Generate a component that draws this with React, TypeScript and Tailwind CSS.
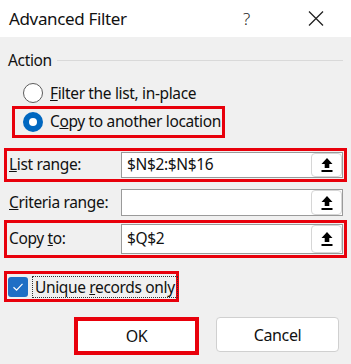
import type { ReactNode } from "react"

const font = { fontFamily: '"Noto Sans", "Open Sans", sans-serif' }

function UpArrow() {
  return (
    <svg width="12" height="16" viewBox="0 0 12 16" aria-hidden="true">
      <polygon points="6,1 11.5,7 8.3,7 8.3,11 3.7,11 3.7,7 0.5,7" fill="#000" />
      <rect x="0.5" y="13" width="11" height="2" fill="#000" />
    </svg>
  )
}

function Radio({ checked }: { checked?: boolean }) {
  return checked ? (
    <span className="flex h-5 w-5 shrink-0 items-center justify-center rounded-full bg-[#0067c0]">
      <span className="h-2 w-2 rounded-full bg-white" />
    </span>
  ) : (
    <span className="h-5 w-5 shrink-0 rounded-full border border-[#5c5c5c] bg-white" />
  )
}

function RangeRow({
  label,
  value,
  boxed,
  rowClass,
}: {
  label: ReactNode
  value?: string
  boxed?: boolean
  rowClass: string
}) {
  return (
    <div
      className={`flex items-center border-[3px] pl-[2px] pr-[1px] ${
        boxed ? "border-[#e8000b]" : "border-transparent"
      } ${rowClass}`}
    >
      <span className="w-[112px] shrink-0 whitespace-nowrap text-[15.5px] text-[#111]">
        {label}
      </span>
      <div className="flex h-full flex-1 items-stretch border border-[#9a9a9a] bg-white">
        <div className="flex flex-1 items-center whitespace-nowrap px-[5px] text-[15.5px] text-[#111]">
          {value}
        </div>
        <button
          type="button"
          className="flex w-[31px] items-center justify-center rounded-[4px] border border-[#d6d6d6] bg-white"
        >
          <UpArrow />
        </button>
      </div>
    </div>
  )
}

export default function App() {
  return (
    <div className="h-[364px] w-[351px] overflow-hidden bg-[#f0f0f0] tracking-[-0.35px]" style={font}>
      <div className="flex h-[37px] items-center bg-white pl-[9px]">
        <span className="w-[226px] whitespace-nowrap text-[17px] text-[#111]">Advanced Filter</span>
        <span className="ml-[8px] text-[17px] font-light text-[#222]">?</span>
        <svg className="ml-[58px]" width="16" height="15" viewBox="0 0 16 15" aria-hidden="true">
          <path d="M1 0.5 L15 14.5 M15 0.5 L1 14.5" stroke="#222" strokeWidth="1.3" />
        </svg>
      </div>

      <div className="flex flex-col">
        <div className="mt-[12px] flex items-center pl-[8px] pr-[8px]">
          <span className="whitespace-nowrap text-[15.5px] leading-[22px] text-[#111]">Action</span>
          <span className="ml-[5px] h-px flex-1 bg-[#d9d9d9]" />
        </div>

        <div className="mt-[11px] flex items-center gap-[7px] pl-[23px] text-[15.5px] leading-[22px] text-[#111]">
          <Radio />
          <span className="whitespace-nowrap">
            <u>F</u>ilter the list, in-place
          </span>
        </div>

        <div className="ml-[12px] mt-[2px] flex h-[32px] w-[213px] items-center gap-[7px] border-[3px] border-[#e8000b] pl-[8px] text-[15.5px] text-[#111]">
          <Radio checked />
          <span className="whitespace-nowrap">
            C<u>o</u>py to another location
          </span>
        </div>

        <div className="mx-[4px] mt-[10px] flex flex-col">
          <RangeRow
            boxed
            rowClass="h-[34px] py-[1px]"
            label={
              <>
                <u>L</u>ist range:
              </>
            }
            value="$N$2:$N$16"
          />
          <RangeRow
            rowClass="mt-[4px] h-[33px]"
            label={
              <>
                <u>C</u>riteria range:
              </>
            }
          />
          <RangeRow
            boxed
            rowClass="mt-[1px] h-[38px] py-[1px]"
            label={
              <>
                Copy <u>t</u>o:
              </>
            }
            value="$Q$2"
          />
        </div>

        <div className="ml-[4px] mt-[13px] flex h-[31px] w-[175px] items-center border-[3px] border-[#e8000b] pl-[1px]">
          <span className="flex h-5 w-5 shrink-0 items-center justify-center rounded-[3px] bg-[#1f6fc5]">
            <svg width="12" height="10" viewBox="0 0 12 10" aria-hidden="true">
              <path d="M1.5 5.2 L4.6 8.2 L10.5 1.8" stroke="#fff" strokeWidth="1.2" fill="none" />
            </svg>
          </span>
          <span className="ml-[4px] whitespace-nowrap border border-dotted border-[#333] px-[2px] text-[15.5px] leading-[20px] text-[#111]">
            Unique <u>r</u>ecords only
          </span>
        </div>

        <div className="mt-[15px] flex items-start pl-[74px]">
          <button
            type="button"
            className="flex h-[38px] w-[125px] items-center justify-center border-[4px] border-[#e8000b] bg-white text-[16px] text-[#111]"
          >
            OK
          </button>
          <button
            type="button"
            className="ml-[17px] flex h-[35px] w-[123px] items-center justify-center rounded-[4px] border border-[#d0d0d0] bg-white text-[16px] text-[#111]"
          >
            Cancel
          </button>
        </div>
      </div>
    </div>
  )
}
